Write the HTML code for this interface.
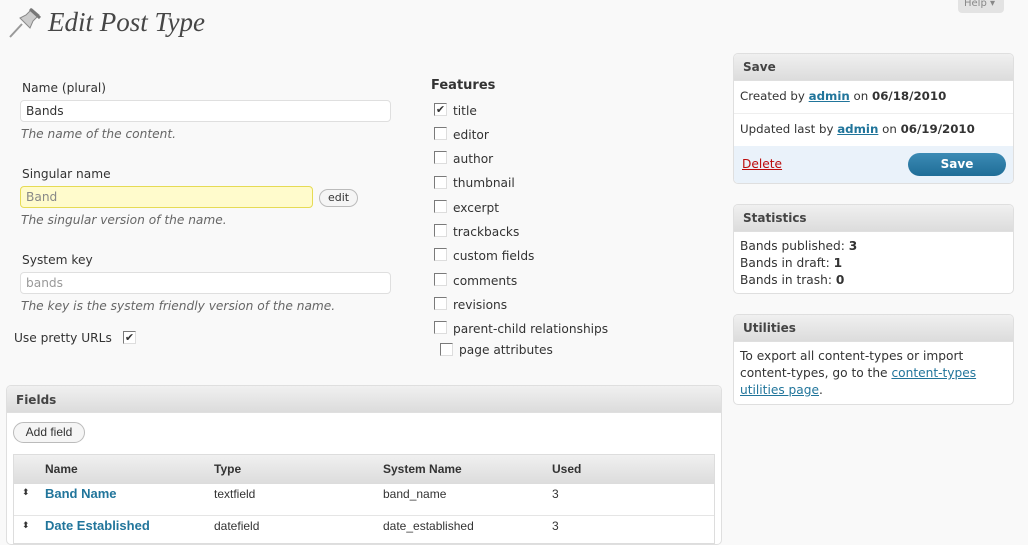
<!DOCTYPE html>
<html><head><style>
*{margin:0;padding:0;box-sizing:border-box}
body{width:1028px;height:537px;overflow:hidden;background:#f9f9f9;font-family:"DejaVu Sans",Verdana,sans-serif;font-size:12.2px;color:#333;position:relative}
.a{position:absolute;white-space:nowrap}
.inp{position:absolute;height:22px;border:1px solid #dfdfdf;border-radius:4px;background:#fff;padding:3px 5px;font-size:12.2px}
.desc{position:absolute;font-style:italic;color:#666;font-size:12.2px}
.cb{position:absolute;width:13px;height:13px;border:1px solid #7a7a7a;border-right-color:#ddd;border-bottom-color:#ddd;background:#fff;font-size:11px;line-height:11px;text-align:center}
.box{position:absolute;border:1px solid #dfdfdf;border-radius:5px;background:#fff;overflow:hidden}
.hd{background:linear-gradient(#f0f0f0,#dcdcdc);height:27px;font-weight:bold;font-size:12px;padding:6px 9px;border-bottom:1px solid #dfdfdf;color:#444}
a{color:#21759b;font-weight:bold}
.btn{position:absolute;border:1px solid #bbb;border-radius:11px;background:#f5f5f5;font-size:11px;text-align:center}
.t{font-family:"Liberation Sans",Arial,sans-serif;font-size:12px}
</style></head><body>
<svg class="a" style="left:8px;top:6px" width="34" height="32" viewBox="0 0 34 32"><path d="M2 31 L14 18" stroke="#999" stroke-width="2"/><path d="M12 12 L22 22 L25 15 L31 9 L24 3 L18 9 Z" fill="#ccc" stroke="#888"/><path d="M22 3 L32 12" stroke="#777" stroke-width="3"/></svg>
<div class="a" style="left:48px;top:7px;font-family:'Liberation Serif',Georgia,serif;font-style:italic;font-size:27px;color:#464646">Edit Post Type</div>
<div class="a" style="left:958px;top:-6px;width:46px;height:19px;background:#e3e3e3;border-radius:0 0 4px 4px;font-size:10px;color:#888;padding:4px 0 0 6px">Help ▾</div>

<div class="a" style="left:22px;top:81px">Name (plural)</div>
<div class="inp" style="left:20px;top:100px;width:371px;color:#333">Bands</div>
<div class="desc" style="left:21px;top:127px">The name of the content.</div>
<div class="a" style="left:22px;top:167px">Singular name</div>
<div class="inp" style="left:20px;top:186px;width:293px;background:#fffbcc;border-color:#e6db55;color:#888">Band</div>
<div class="btn" style="left:319px;top:189px;width:39px;height:18px;line-height:16px">edit</div>
<div class="desc" style="left:21px;top:213px">The singular version of the name.</div>
<div class="a" style="left:22px;top:253px">System key</div>
<div class="inp" style="left:20px;top:272px;width:371px;color:#999">bands</div>
<div class="desc" style="left:21px;top:299px">The key is the system friendly version of the name.</div>
<div class="a" style="left:14px;top:331px">Use pretty URLs</div>
<div class="cb" style="left:123px;top:331px">✔</div>

<div class="a" style="left:431px;top:78px;font-weight:bold;font-size:13px">Features</div>
<div class="cb" style="left:434px;top:103px">✔</div><div class="a" style="left:453px;top:104px">title</div>
<div class="cb" style="left:434px;top:127px"></div><div class="a" style="left:453px;top:128px">editor</div>
<div class="cb" style="left:434px;top:151px"></div><div class="a" style="left:453px;top:152px">author</div>
<div class="cb" style="left:434px;top:176px"></div><div class="a" style="left:453px;top:176px">thumbnail</div>
<div class="cb" style="left:434px;top:200px"></div><div class="a" style="left:453px;top:201px">excerpt</div>
<div class="cb" style="left:434px;top:224px"></div><div class="a" style="left:453px;top:225px">trackbacks</div>
<div class="cb" style="left:434px;top:248px"></div><div class="a" style="left:453px;top:249px">custom fields</div>
<div class="cb" style="left:434px;top:273px"></div><div class="a" style="left:453px;top:274px">comments</div>
<div class="cb" style="left:434px;top:297px"></div><div class="a" style="left:453px;top:298px">revisions</div>
<div class="cb" style="left:434px;top:321px"></div><div class="a" style="left:453px;top:322px">parent-child relationships</div>
<div class="cb" style="left:440px;top:343px"></div><div class="a" style="left:459px;top:343px">page attributes</div>

<div class="box" style="left:733px;top:53px;width:281px;height:131px">
<div class="hd" style="height:27px">Save</div>
<div style="height:33px;padding:8px 6px;border-bottom:1px solid #eee;font-size:11.8px">Created by <a href="#">admin</a> on <b>06/18/2010</b></div>
<div style="height:32px;padding:8px 6px;font-size:11.8px">Updated last by <a href="#">admin</a> on <b>06/19/2010</b></div>
<div style="height:38px;background:#eaf2fa;position:relative">
<span class="a" style="left:8px;top:11px;color:#bc0b0b;text-decoration:underline">Delete</span>
<div class="a" style="left:174px;top:7px;width:98px;height:23px;border-radius:12px;background:linear-gradient(#3c8bb5,#1f6d97);color:#fff;font-weight:bold;font-size:12px;text-align:center;line-height:22px">Save</div>
</div></div>

<div class="box" style="left:733px;top:204px;width:281px;height:90px">
<div class="hd">Statistics</div>
<div style="padding:6px 6px;line-height:17px">Bands published: <b>3</b><br>Bands in draft: <b>1</b><br>Bands in trash: <b>0</b></div>
</div>

<div class="box" style="left:733px;top:314px;width:281px;height:91px">
<div class="hd">Utilities</div>
<div style="padding:6px 6px;line-height:17px;white-space:normal">To export all content-types or import content-types, go to the <a href="#" style="font-weight:normal;text-decoration:underline">content-types utilities page</a>.</div>
</div>

<div class="box" style="left:6px;top:385px;width:716px;height:160px">
<div class="hd" style="padding:7px 9px">Fields</div>
</div>
<div class="btn t" style="left:13px;top:422px;width:72px;height:21px;line-height:19px;border-radius:11px">Add field</div>
<div class="a" style="left:13px;top:454px;width:702px;height:90px;border:1px solid #ddd;background:#fff"></div>
<div class="a t" style="left:14px;top:455px;width:700px;height:29px;background:linear-gradient(#f0f0f0,#dcdcdc)"></div>
<div class="a t" style="left:45px;top:462px;font-weight:bold">Name</div>
<div class="a t" style="left:214px;top:462px;font-weight:bold">Type</div>
<div class="a t" style="left:383px;top:462px;font-weight:bold">System Name</div>
<div class="a t" style="left:552px;top:462px;font-weight:bold">Used</div>
<div class="a t" style="left:22px;top:487px;font-size:9px">⬍</div>
<div class="a t" style="left:45px;top:486px;font-weight:bold;color:#21759b;font-size:13px">Band Name</div>
<div class="a t" style="left:214px;top:487px">textfield</div>
<div class="a t" style="left:383px;top:487px">band_name</div>
<div class="a t" style="left:552px;top:487px">3</div>
<div class="a" style="left:14px;top:515px;width:700px;border-top:1px solid #e5e5e5"></div>
<div class="a t" style="left:22px;top:520px;font-size:9px">⬍</div>
<div class="a t" style="left:45px;top:518px;font-weight:bold;color:#21759b;font-size:13px">Date Established</div>
<div class="a t" style="left:214px;top:519px">datefield</div>
<div class="a t" style="left:383px;top:519px">date_established</div>
<div class="a t" style="left:552px;top:519px">3</div>
</body></html>
